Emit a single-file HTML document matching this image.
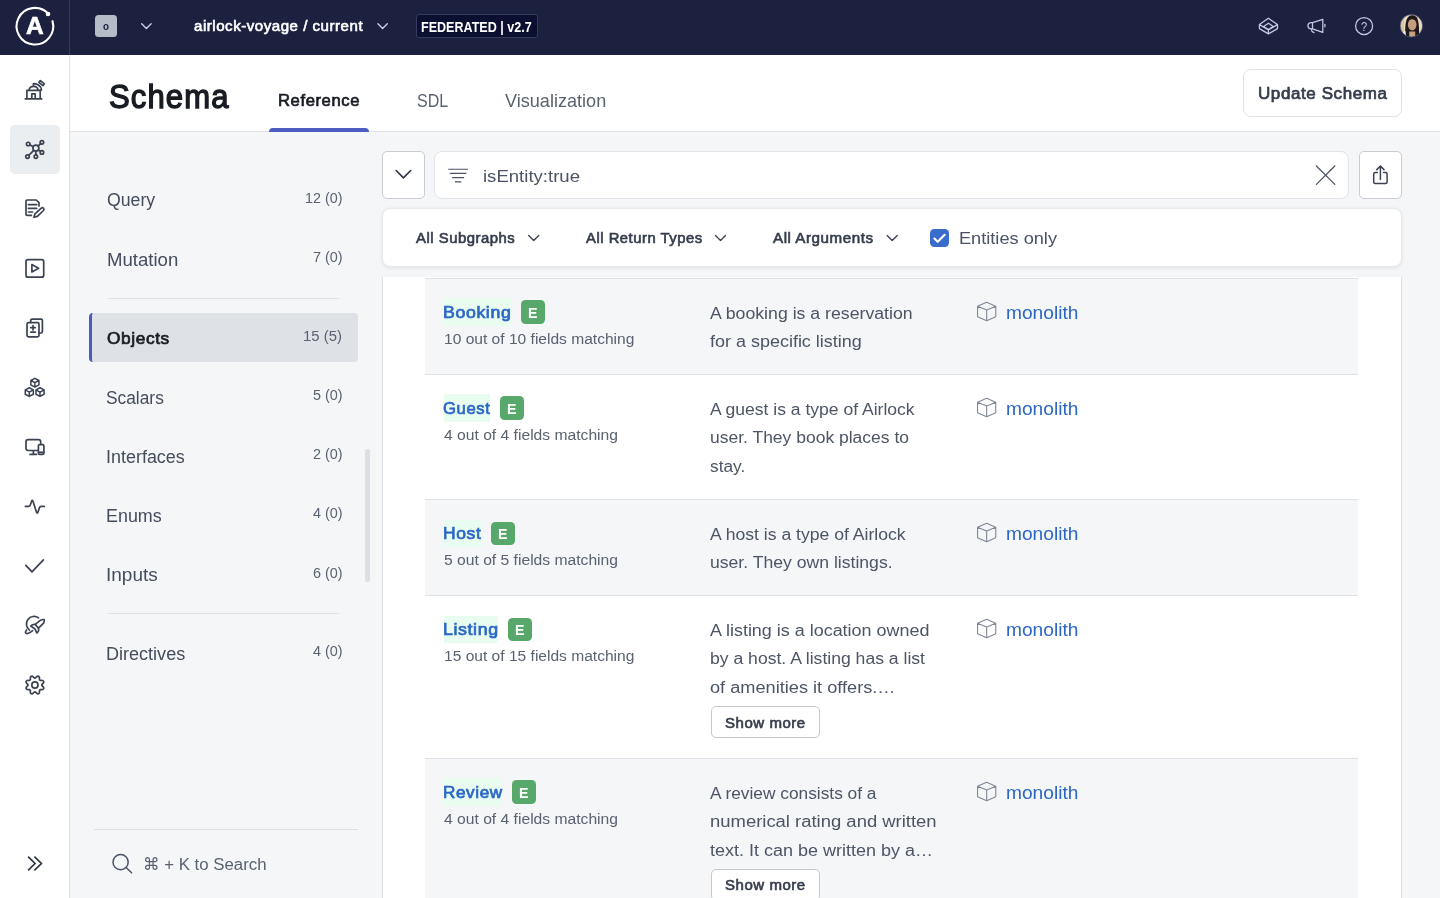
<!DOCTYPE html>
<html lang="en">
<head>
<meta charset="utf-8">
<title>Schema Reference - airlock-voyage / current - Apollo Studio</title>
<style>
*{box-sizing:border-box;margin:0;padding:0}
html,body{width:1440px;height:898px;overflow:hidden;background:#f4f6f8}
body{font-family:"Liberation Sans",sans-serif;color:#424855;-webkit-font-smoothing:antialiased}
#app{position:relative;width:1440px;height:898px;overflow:hidden;background:#f4f6f8}
.abs{position:absolute}
#txt{position:absolute;left:0;top:0;width:1440px;height:898px;will-change:transform}
.t{position:absolute;white-space:nowrap;transform-origin:0 50%;display:block;text-decoration:none}
svg{position:absolute;overflow:visible}
.ic{fill:none;stroke:#3b4252;stroke-width:1.7;stroke-linecap:round;stroke-linejoin:round}
.tic{fill:none;stroke:#c5cae0;stroke-width:1.25;stroke-linecap:round;stroke-linejoin:round}
/* layout boxes */
#topbar{left:0;top:0;width:1440px;height:55px;background:#1c2140}
#logocell{left:0;top:0;width:70px;height:55px;border-right:1px solid #353b5c}
#rail{left:0;top:55px;width:70px;height:843px;background:#fff;border-right:1px solid #dee2e7}
#railactive{left:10px;top:124.5px;width:49.5px;height:49.5px;border-radius:5px;background:#ebeef0}
#header{left:70px;top:55px;width:1370px;height:77px;background:#fff;border-bottom:1px solid #dee2e7}
#tabline{left:269px;top:127.5px;width:100px;height:4px;background:#4c5cc0;border-radius:4px 4px 0 0}
#updbtn{left:1242.5px;top:69.2px;width:159.4px;height:47.5px;border:1px solid #dee2e7;border-radius:7.5px;background:#fff}
#orgbox{left:95px;top:15px;width:22px;height:22px;border-radius:3.5px;background:#b6bbc8}
#fedbadge{left:416px;top:14px;width:122px;height:23.5px;border:1px solid #353b5c;border-radius:3px;background:#0b1031}
.navdiv{height:1px;background:#dee2e7}
#navsel{left:89px;top:313px;width:269px;height:49px;border-radius:4px;background:#dee2e7;border-left:3.75px solid #4a5bbd}
#scrollthumb{left:365.3px;top:449px;width:4.3px;height:133px;border-radius:2px;background:#dcdfe5}
#ddbtn{left:382px;top:151px;width:43px;height:48px;border:1px solid #c9ccd3;border-radius:5px;background:#fff}
#search{left:434px;top:151px;width:915px;height:48px;border:1px solid #e1e4e9;border-radius:8px;background:#fff}
#sharebtn{left:1359px;top:151px;width:43px;height:48px;border:1px solid #c9ccd3;border-radius:5px;background:#fff}
#filterbar{left:382px;top:208px;width:1020px;height:59px;border:1px solid #e6e9ed;border-radius:8px;background:#fff;box-shadow:0 0 4px rgba(18,21,26,.05),0 2px 3px rgba(18,21,26,.04)}
#checkbox{left:930px;top:228.5px;width:18.8px;height:18.8px;border-radius:4.2px;background:#3a6ccb}
#panel{left:382px;top:277px;width:1020px;height:640px;background:#fff;border:1px solid #dee2e7;border-top:none}
.row{left:425px;width:933px;border-top:1px solid #dee2e7}
.row.g{background:#f4f6f8}
.hl{background:#e8fcef;height:27.8px}
.eb{width:23.8px;height:23.6px;border-radius:4.5px;background:#58a86b}
.smbtn{left:711px;width:109px;height:32.2px;border:1px solid #c4c8d0;border-radius:5px;background:#fff}
</style>
</head>
<body>
<div id="app">

<!-- top navigation bar -->
<div id="topbar" class="abs"></div>
<div id="logocell" class="abs"></div>
<div id="orgbox" class="abs"></div>
<div id="fedbadge" class="abs"></div>
<!-- left rail -->
<div id="rail" class="abs"></div>
<div id="railactive" class="abs"></div>
<!-- page header -->
<div id="header" class="abs"></div>
<div id="tabline" class="abs"></div>
<div id="updbtn" class="abs"></div>
<!-- type navigation -->
<div class="abs navdiv" style="left:107.5px;top:298px;width:231.5px"></div>
<div id="navsel" class="abs"></div>
<div class="abs navdiv" style="left:107.5px;top:613px;width:231.5px"></div>
<div class="abs navdiv" style="left:94px;top:828.5px;width:264px"></div>
<div id="scrollthumb" class="abs"></div>
<!-- results panel -->
<div id="panel" class="abs"></div>
<div class="abs row g" style="top:277.5px;height:97px"></div>
<div class="abs row" style="top:374.3px;height:125px"></div>
<div class="abs row g" style="top:499px;height:97px"></div>
<div class="abs row" style="top:595px;height:163px"></div>
<div class="abs row g" style="top:758px;height:160px"></div>
<div class="abs hl" style="left:443.8px;top:298.4px;width:67.2px"></div>
<div class="abs hl" style="left:443.8px;top:394.4px;width:46.2px"></div>
<div class="abs hl" style="left:443.8px;top:519.5px;width:37.2px"></div>
<div class="abs hl" style="left:443.8px;top:615.5px;width:54.5px"></div>
<div class="abs hl" style="left:443.8px;top:778.4px;width:58.6px"></div>
<div class="abs eb" style="left:520.9px;top:300.4px"></div>
<div class="abs eb" style="left:499.9px;top:396.4px"></div>
<div class="abs eb" style="left:490.9px;top:521.5px"></div>
<div class="abs eb" style="left:508.2px;top:617.5px"></div>
<div class="abs eb" style="left:512.3px;top:780.4px"></div>
<div class="abs smbtn" style="top:706px"></div>
<div class="abs smbtn" style="top:868.6px"></div>
<!-- search / filter controls -->
<div id="ddbtn" class="abs"></div>
<div id="search" class="abs"></div>
<div id="sharebtn" class="abs"></div>
<div id="filterbar" class="abs"></div>
<div id="checkbox" class="abs"></div>

<!-- text layer -->
<div id="txt">
<span class="t" style="left:26.2px;top:14.000px;font-size:24.4px;line-height:24.4px;font-weight:700;-webkit-text-stroke:0.73px currentColor;color:#ffffff;transform:scaleX(0.9986);">A</span>
<span class="t" style="left:1361.0px;top:21.000px;font-size:12.0px;line-height:12.0px;font-weight:400;color:#c5cae0;transform:scaleX(0.9271);">?</span>
<span class="t" style="left:103.0px;top:21.000px;font-size:10.5px;line-height:10.5px;font-weight:700;color:#1c2140;transform:scaleX(0.9343);">o</span>
<span class="t" style="left:194.2px;top:19.000px;font-size:14.44px;line-height:14.44px;font-weight:400;-webkit-text-stroke:0.61px currentColor;letter-spacing:0.51px;color:#ffffff;transform:scaleX(1.0420);">airlock-voyage / current</span>
<span class="t" style="left:421.4px;top:21.000px;font-size:13.9px;line-height:13.9px;font-weight:700;color:#ffffff;transform:scaleX(0.9029);">FEDERATED | v2.7</span>
<h1 class="t" style="left:109.4px;top:81.000px;font-size:32.49px;line-height:32.49px;font-weight:400;-webkit-text-stroke:1.36px currentColor;letter-spacing:1.14px;color:#191c23;transform:scaleX(0.9565);">Schema</h1>
<a class="t" style="left:278.2px;top:92.000px;font-size:17.0px;line-height:17.0px;font-weight:400;-webkit-text-stroke:0.71px currentColor;letter-spacing:0.60px;color:#191c23;transform:scaleX(0.9780);">Reference</a>
<a class="t" style="left:416.6px;top:93.000px;font-size:17.9px;line-height:17.9px;font-weight:400;color:#5a6270;transform:scaleX(0.8962);">SDL</a>
<a class="t" style="left:504.6px;top:93.000px;font-size:17.9px;line-height:17.9px;font-weight:400;color:#5a6270;transform:scaleX(1.0107);">Visualization</a>
<span class="t" style="left:1257.5px;top:86.000px;font-size:16.62px;line-height:16.62px;font-weight:400;-webkit-text-stroke:0.70px currentColor;letter-spacing:0.58px;color:#353c4b;transform:scaleX(1.0231);">Update Schema</span>
<a class="t" style="left:106.6px;top:192.000px;font-size:17.5px;line-height:17.5px;font-weight:400;color:#454c5b;transform:scaleX(1.0114);">Query</a>
<span class="t" style="left:304.8px;top:190.000px;font-size:15.0px;line-height:15.0px;font-weight:400;color:#5a6270;transform:scaleX(0.9544);">12 (0)</span>
<a class="t" style="left:106.5px;top:252.000px;font-size:17.5px;line-height:17.5px;font-weight:400;color:#454c5b;transform:scaleX(1.0622);">Mutation</a>
<span class="t" style="left:312.6px;top:249.000px;font-size:15.0px;line-height:15.0px;font-weight:400;color:#5a6270;transform:scaleX(0.9597);">7 (0)</span>
<a class="t" style="left:107.0px;top:331.000px;font-size:16.62px;line-height:16.62px;font-weight:400;-webkit-text-stroke:0.70px currentColor;letter-spacing:0.58px;color:#191c23;transform:scaleX(1.0399);">Objects</a>
<span class="t" style="left:303.3px;top:328.000px;font-size:15.0px;line-height:15.0px;font-weight:400;color:#5a6270;transform:scaleX(0.9927);">15 (5)</span>
<a class="t" style="left:106.3px;top:390.000px;font-size:17.5px;line-height:17.5px;font-weight:400;color:#454c5b;transform:scaleX(0.9904);">Scalars</a>
<span class="t" style="left:312.6px;top:387.000px;font-size:15.0px;line-height:15.0px;font-weight:400;color:#5a6270;transform:scaleX(0.9597);">5 (0)</span>
<a class="t" style="left:105.7px;top:449.000px;font-size:17.5px;line-height:17.5px;font-weight:400;color:#454c5b;transform:scaleX(1.0252);">Interfaces</a>
<span class="t" style="left:312.6px;top:446.000px;font-size:15.0px;line-height:15.0px;font-weight:400;color:#5a6270;transform:scaleX(0.9597);">2 (0)</span>
<a class="t" style="left:105.7px;top:508.000px;font-size:17.5px;line-height:17.5px;font-weight:400;color:#454c5b;transform:scaleX(1.0226);">Enums</a>
<span class="t" style="left:312.6px;top:505.000px;font-size:15.0px;line-height:15.0px;font-weight:400;color:#5a6270;transform:scaleX(0.9597);">4 (0)</span>
<a class="t" style="left:105.7px;top:567.000px;font-size:17.5px;line-height:17.5px;font-weight:400;color:#454c5b;transform:scaleX(1.0862);">Inputs</a>
<span class="t" style="left:312.6px;top:565.000px;font-size:15.0px;line-height:15.0px;font-weight:400;color:#5a6270;transform:scaleX(0.9597);">6 (0)</span>
<a class="t" style="left:105.8px;top:646.000px;font-size:17.5px;line-height:17.5px;font-weight:400;color:#454c5b;transform:scaleX(1.0309);">Directives</a>
<span class="t" style="left:312.6px;top:643.000px;font-size:15.0px;line-height:15.0px;font-weight:400;color:#5a6270;transform:scaleX(0.9597);">4 (0)</span>
<span class="t" style="left:143.0px;top:856.000px;font-size:17.3px;line-height:17.3px;font-weight:400;color:#5a6270;transform:scaleX(0.9724);">&#8984; + K to Search</span>
<span class="t" style="left:482.7px;top:168.000px;font-size:16.4px;line-height:16.4px;font-weight:400;color:#4a5264;transform:scaleX(1.1326);">isEntity:true</span>
<span class="t" style="left:416.0px;top:231.000px;font-size:14.44px;line-height:14.44px;font-weight:400;-webkit-text-stroke:0.61px currentColor;letter-spacing:0.51px;color:#353c4b;transform:scaleX(1.0287);">All Subgraphs</span>
<span class="t" style="left:585.6px;top:231.000px;font-size:14.44px;line-height:14.44px;font-weight:400;-webkit-text-stroke:0.61px currentColor;letter-spacing:0.51px;color:#353c4b;transform:scaleX(1.0253);">All Return Types</span>
<span class="t" style="left:772.7px;top:231.000px;font-size:14.44px;line-height:14.44px;font-weight:400;-webkit-text-stroke:0.61px currentColor;letter-spacing:0.51px;color:#353c4b;transform:scaleX(1.0502);">All Arguments</span>
<label class="t" style="left:958.6px;top:230.000px;font-size:17.3px;line-height:17.3px;font-weight:400;color:#4a5264;transform:scaleX(1.0516);">Entities only</label>
<a class="t" style="left:443.4px;top:304.000px;font-size:16.34px;line-height:16.34px;font-weight:400;-webkit-text-stroke:0.69px currentColor;letter-spacing:0.57px;color:#2b67c6;transform:scaleX(1.0853);">Booking</a>
<span class="t" style="left:527.9px;top:305.000px;font-size:15.0px;line-height:15.0px;font-weight:700;color:#ffffff;transform:scaleX(0.9485);">E</span>
<span class="t" style="left:443.7px;top:331.000px;font-size:15.1px;line-height:15.1px;font-weight:400;color:#5a6270;transform:scaleX(1.0314);">10 out of 10 fields matching</span>
<span class="t" style="left:710.4px;top:305.000px;font-size:17.3px;line-height:17.3px;font-weight:400;color:#4d5565;transform:scaleX(1.0238);">A booking is a reservation</span>
<span class="t" style="left:710.4px;top:333.000px;font-size:17.3px;line-height:17.3px;font-weight:400;color:#4d5565;transform:scaleX(1.0397);">for a specific listing</span>
<a class="t" style="left:1006.0px;top:305.000px;font-size:17.9px;line-height:17.9px;font-weight:400;color:#2b67c6;transform:scaleX(1.0706);">monolith</a>
<a class="t" style="left:443.4px;top:400.000px;font-size:16.34px;line-height:16.34px;font-weight:400;-webkit-text-stroke:0.69px currentColor;letter-spacing:0.57px;color:#2b67c6;transform:scaleX(1.0205);">Guest</a>
<span class="t" style="left:506.9px;top:401.000px;font-size:15.0px;line-height:15.0px;font-weight:700;color:#ffffff;transform:scaleX(0.9485);">E</span>
<span class="t" style="left:443.7px;top:427.000px;font-size:15.1px;line-height:15.1px;font-weight:400;color:#5a6270;transform:scaleX(1.0369);">4 out of 4 fields matching</span>
<span class="t" style="left:710.4px;top:401.000px;font-size:17.3px;line-height:17.3px;font-weight:400;color:#4d5565;transform:scaleX(1.0142);">A guest is a type of Airlock</span>
<span class="t" style="left:710.4px;top:429.000px;font-size:17.3px;line-height:17.3px;font-weight:400;color:#4d5565;transform:scaleX(1.0121);">user. They book places to</span>
<span class="t" style="left:710.4px;top:458.000px;font-size:17.3px;line-height:17.3px;font-weight:400;color:#4d5565;transform:scaleX(0.9995);">stay.</span>
<a class="t" style="left:1006.0px;top:401.000px;font-size:17.9px;line-height:17.9px;font-weight:400;color:#2b67c6;transform:scaleX(1.0706);">monolith</a>
<a class="t" style="left:443.4px;top:525.000px;font-size:16.34px;line-height:16.34px;font-weight:400;-webkit-text-stroke:0.69px currentColor;letter-spacing:0.57px;color:#2b67c6;transform:scaleX(1.0701);">Host</a>
<span class="t" style="left:497.9px;top:526.000px;font-size:15.0px;line-height:15.0px;font-weight:700;color:#ffffff;transform:scaleX(0.9485);">E</span>
<span class="t" style="left:443.7px;top:552.000px;font-size:15.1px;line-height:15.1px;font-weight:400;color:#5a6270;transform:scaleX(1.0369);">5 out of 5 fields matching</span>
<span class="t" style="left:710.4px;top:526.000px;font-size:17.3px;line-height:17.3px;font-weight:400;color:#4d5565;transform:scaleX(1.0181);">A host is a type of Airlock</span>
<span class="t" style="left:710.4px;top:554.000px;font-size:17.3px;line-height:17.3px;font-weight:400;color:#4d5565;transform:scaleX(1.0183);">user. They own listings.</span>
<a class="t" style="left:1006.0px;top:526.000px;font-size:17.9px;line-height:17.9px;font-weight:400;color:#2b67c6;transform:scaleX(1.0706);">monolith</a>
<a class="t" style="left:443.4px;top:621.000px;font-size:16.34px;line-height:16.34px;font-weight:400;-webkit-text-stroke:0.69px currentColor;letter-spacing:0.57px;color:#2b67c6;transform:scaleX(1.0873);">Listing</a>
<span class="t" style="left:515.2px;top:622.000px;font-size:15.0px;line-height:15.0px;font-weight:700;color:#ffffff;transform:scaleX(0.9485);">E</span>
<span class="t" style="left:443.7px;top:648.000px;font-size:15.1px;line-height:15.1px;font-weight:400;color:#5a6270;transform:scaleX(1.0314);">15 out of 15 fields matching</span>
<span class="t" style="left:710.4px;top:622.000px;font-size:17.3px;line-height:17.3px;font-weight:400;color:#4d5565;transform:scaleX(1.0381);">A listing is a location owned</span>
<span class="t" style="left:710.4px;top:650.000px;font-size:17.3px;line-height:17.3px;font-weight:400;color:#4d5565;transform:scaleX(1.0173);">by a host. A listing has a list</span>
<span class="t" style="left:710.4px;top:679.000px;font-size:17.3px;line-height:17.3px;font-weight:400;color:#4d5565;transform:scaleX(1.0515);">of amenities it offers.&hellip;</span>
<a class="t" style="left:1006.0px;top:622.000px;font-size:17.9px;line-height:17.9px;font-weight:400;color:#2b67c6;transform:scaleX(1.0706);">monolith</a>
<span class="t" style="left:725.0px;top:716.000px;font-size:14.44px;line-height:14.44px;font-weight:400;-webkit-text-stroke:0.61px currentColor;letter-spacing:0.51px;color:#353c4b;transform:scaleX(1.0399);">Show more</span>
<a class="t" style="left:443.4px;top:784.000px;font-size:16.34px;line-height:16.34px;font-weight:400;-webkit-text-stroke:0.69px currentColor;letter-spacing:0.57px;color:#2b67c6;transform:scaleX(1.0492);">Review</a>
<span class="t" style="left:519.3px;top:785.000px;font-size:15.0px;line-height:15.0px;font-weight:700;color:#ffffff;transform:scaleX(0.9485);">E</span>
<span class="t" style="left:443.7px;top:811.000px;font-size:15.1px;line-height:15.1px;font-weight:400;color:#5a6270;transform:scaleX(1.0369);">4 out of 4 fields matching</span>
<span class="t" style="left:710.4px;top:785.000px;font-size:17.3px;line-height:17.3px;font-weight:400;color:#4d5565;transform:scaleX(1.0020);">A review consists of a</span>
<span class="t" style="left:710.4px;top:813.000px;font-size:17.3px;line-height:17.3px;font-weight:400;color:#4d5565;transform:scaleX(1.0675);">numerical rating and written</span>
<span class="t" style="left:710.4px;top:842.000px;font-size:17.3px;line-height:17.3px;font-weight:400;color:#4d5565;transform:scaleX(1.0411);">text. It can be written by a&hellip;</span>
<a class="t" style="left:1006.0px;top:785.000px;font-size:17.9px;line-height:17.9px;font-weight:400;color:#2b67c6;transform:scaleX(1.0706);">monolith</a>
<span class="t" style="left:725.0px;top:878.000px;font-size:14.44px;line-height:14.44px;font-weight:400;-webkit-text-stroke:0.61px currentColor;letter-spacing:0.51px;color:#353c4b;transform:scaleX(1.0399);">Show more</span>
</div>
<!-- icons -->
<svg width="1440" height="898" viewBox="0 0 1440 898" style="left:0;top:0;pointer-events:none" aria-hidden="true">
<path d="M48.28 13.72A18.3 18.3 0 1 0 52.49 21.16" fill="none" stroke="#fff" stroke-width="2.1" stroke-linecap="round"/>
<circle cx="48.0" cy="14.0" r="2.3" fill="#fff"/>
<path class="tic" style="stroke-width:1.4;stroke:#c9cee3" d="M141.7 23.7L146.4 28.5L151.1 23.7"/>
<path class="tic" style="stroke-width:1.4;stroke:#c9cee3" d="M377.9 23.7L382.6 28.5L387.3 23.7"/>
<path class="tic" d="M1268.4 18.3L1277.5 24.6V28.6L1268.4 33.9L1259.4 28.6V24.6ZM1259.4 24.6L1268.4 29.9L1277.5 24.6M1268.4 29.9V33.9M1268.4 23.2L1273.2 26.4L1268.4 29.6L1263.6 26.4Z"/>
<path class="tic" d="M1322.8 19.3V32.4L1312.5 28.9H1310.6A3.2 3.2 0 0 1 1310.6 22.6H1312.5ZM1312.5 22.7V28.9M1311.2 29C1311.4 30.8 1312.4 32.2 1314 32.7M1324.9 24.3V26.8"/>
<circle class="tic" cx="1364.1" cy="26" r="8.5"/>
<defs><clipPath id="avc"><circle cx="1411.4" cy="25.8" r="11.2"/></clipPath></defs>
<g clip-path="url(#avc)"><rect x="1400" y="14" width="23" height="24" fill="#e9d9bf"/><path d="M1400 14H1404V38H1400Z" fill="#dcc4a0"/><path d="M1405.6 38C1404.8 30 1405 20.5 1408.2 17C1410.8 14.6 1414.6 14.8 1416.8 17.6C1419 21 1419.4 30 1418.8 38Z" fill="#1d1819"/><ellipse cx="1412.2" cy="24.6" rx="4.3" ry="5.8" fill="#c59d7e"/><path d="M1409.2 31.5H1415.2V38H1409.2Z" fill="#c8a182"/><path d="M1400 33L1405.4 31L1406.4 38H1400Z" fill="#ece9ee"/><path d="M1407.9 22.5C1408.4 19.6 1411.6 17.6 1416.5 21C1416 18 1413.8 16.2 1411.8 16.4C1409.4 16.8 1407.8 19.5 1407.9 22.5Z" fill="#1d1819"/></g>
<circle cx="1411.4" cy="25.8" r="11.3" fill="none" stroke="#3a4063" stroke-width="0.8"/>
<path class="ic" d="M25.3 98.9H41.7M26.9 98.9V90.4H40.2V98.9M31.8 98.9V93.8H35.2V98.9M28.9 90.4A4.7 4.7 0 0 1 38.2 90.4M33.4 85.6V83.6Q37.8 83.4 40.3 86.8Q41.6 88.4 41.4 90.2M38.9 82.4L40.4 80.6L44.4 83.8L42.9 85.6Z"/>
<path class="ic" d="M33.24 146.76L29.73 144.84M38.02 146.11L40.64 143.57M38.33 149.91L40.46 151.40M35.87 151.20L35.87 154.80M33.75 150.32L28.74 155.31"/>
<circle class="ic" cx="35.87" cy="148.2" r="3.0"/>
<circle class="ic" cx="28.2" cy="144.0" r="1.75"/>
<circle class="ic" cx="41.9" cy="142.35" r="1.75"/>
<circle class="ic" cx="41.9" cy="152.4" r="1.75"/>
<circle class="ic" cx="35.87" cy="156.55" r="1.75"/>
<circle class="ic" cx="27.5" cy="156.55" r="1.75"/>
<path class="ic" d="M31.4 215.4H27.2Q26 215.4 26 214.2V201.2Q26 200 27.2 200H36.2L39 202.6V206M28.4 204.7H36.7M28.4 208.4H36.7M28.4 212H32.5M41.3 208.2Q42.4 207.2 43.5 208.3Q44.5 209.4 43.5 210.5L37.4 216.4L33.9 217.3L34.9 213.9Z"/>
<rect class="ic" x="26" y="259.7" width="17.7" height="17.5" rx="2"/>
<path class="ic" d="M31.9 264.6V271.9L38.6 268.2Z"/>
<rect class="ic" x="27" y="322.7" width="12" height="14.2" rx="1.6"/>
<path class="ic" d="M30.7 322.5V320.6Q30.7 319.2 32.1 319.2H41Q42.4 319.2 42.4 320.6V331.6Q42.4 333 41 333H39.2M33 325.5V329.9M30.8 327.7H35.2M30.9 332.2H35.2"/>
<path class="ic" style="stroke-width:1.5" d="M34.90 378.35L38.95 380.52L38.95 384.88L34.90 387.05L30.85 384.88L30.85 380.52ZM30.85 380.52L34.90 382.70L38.95 380.52M34.90 382.70L34.90 387.05"/>
<path class="ic" style="stroke-width:1.5" d="M29.30 387.75L33.35 389.93L33.35 394.28L29.30 396.45L25.25 394.28L25.25 389.93ZM25.25 389.93L29.30 392.10L33.35 389.93M29.30 392.10L29.30 396.45"/>
<path class="ic" style="stroke-width:1.5" d="M40.00 387.75L44.05 389.93L44.05 394.28L40.00 396.45L35.95 394.28L35.95 389.93ZM35.95 389.93L40.00 392.10L44.05 389.93M40.00 392.10L40.00 396.45"/>
<path class="ic" d="M37.6 450.5H28.2Q26 450.5 26 448.3V441.9Q26 439.7 28.2 439.7H38.5Q40.7 439.7 40.7 441.9V443.6M33.4 450.6V454.4M30 454.4H36.5"/>
<rect class="ic" x="38.4" y="444.7" width="5.5" height="9.7" rx="1.4"/>
<path class="ic" d="M38.6 452.3H43.7"/>
<path class="ic" d="M25.4 506.4H28.6Q29.8 506.4 30.2 505.2L31.6 501.2Q32.4 499.4 33 501.3L36.5 512.3Q37.2 514 37.9 512.2L39.6 507.4Q40 506.4 41 506.4H44.2"/>
<path class="ic" d="M25.9 565.4L32 571.9L43.4 559.9"/>
<path class="ic" d="M38.5 617.9A7.4 7.4 0 0 0 29.5 630.1M26.5 630Q24 633.6 27.2 633.6Q29.6 633.4 32.6 630.7M35.2 624.4L40.6 620.2Q42.6 619.2 44.2 619.6Q44.7 621.2 43.6 623.2L38.5 628.2ZM35.2 624.4Q32.4 624.2 30.7 626L34.7 628.7M38.5 628.2Q39.3 630.8 37 633L34.7 628.7"/>
<path class="ic" d="M41.85 685.00L41.95 685.46L42.27 685.97L42.94 686.60L43.56 687.32L43.74 688.00L43.63 688.62L43.27 689.13L42.67 689.48L41.72 689.56L40.80 689.52L40.22 689.66L39.81 689.91L39.56 690.32L39.42 690.90L39.46 691.82L39.38 692.77L39.03 693.37L38.52 693.73L37.90 693.84L37.22 693.66L36.50 693.04L35.87 692.37L35.36 692.05L34.90 691.95L34.44 692.05L33.93 692.37L33.30 693.04L32.58 693.66L31.90 693.84L31.28 693.73L30.77 693.37L30.42 692.77L30.34 691.82L30.38 690.90L30.24 690.32L29.99 689.91L29.58 689.66L29.00 689.52L28.08 689.56L27.13 689.48L26.53 689.13L26.17 688.62L26.06 688.00L26.24 687.32L26.86 686.60L27.53 685.97L27.85 685.46L27.95 685.00L27.85 684.54L27.53 684.03L26.86 683.40L26.24 682.68L26.06 682.00L26.17 681.38L26.53 680.87L27.13 680.52L28.08 680.44L29.00 680.48L29.58 680.34L29.99 680.09L30.24 679.68L30.38 679.10L30.34 678.18L30.42 677.23L30.77 676.63L31.28 676.27L31.90 676.16L32.58 676.34L33.30 676.96L33.93 677.63L34.44 677.95L34.90 678.05L35.36 677.95L35.87 677.63L36.50 676.96L37.22 676.34L37.90 676.16L38.52 676.27L39.03 676.63L39.38 677.23L39.46 678.18L39.42 679.10L39.56 679.68L39.81 680.09L40.22 680.34L40.80 680.48L41.72 680.44L42.67 680.52L43.27 680.87L43.63 681.38L43.74 682.00L43.56 682.68L42.94 683.40L42.27 684.03L41.95 684.54Z"/>
<circle class="ic" cx="34.9" cy="685" r="3.1"/>
<path class="ic" style="stroke:#2f3542;stroke-linecap:butt;stroke-linejoin:miter" d="M28.1 856.7L35 863.5L28.1 870.3M34.4 856.7L41.4 863.5L34.4 870.3"/>
<circle cx="120.6" cy="862.2" r="7.6" fill="none" stroke="#4a5264" stroke-width="1.5"/>
<path d="M126.1 867.5L131.6 872.8" fill="none" stroke="#4a5264" stroke-width="1.5" stroke-linecap="round"/>
<path d="M396.2 170.5L403.4 177.9L410.7 170.5" fill="none" stroke="#2f3542" stroke-width="1.6" stroke-linecap="round" stroke-linejoin="round"/>
<path d="M448.7 169.2H467.5M450.4 173.4H465.9M452.5 177.6H463.7M455.2 181.8H460.9" fill="none" stroke="#4a5264" stroke-width="1.15" stroke-linecap="round"/>
<path d="M1316.4 166L1334.8 184.4M1334.8 166L1316.4 184.4" fill="none" stroke="#4a5264" stroke-width="1.25" stroke-linecap="round"/>
<path d="M1380.4 166V179.4M1376.8 169.6L1380.4 166L1384 169.6M1377.4 172.5H1375.2Q1373.7 172.5 1373.7 174V182.1Q1373.7 183.6 1375.2 183.6H1385.6Q1387.1 183.6 1387.1 182.1V174Q1387.1 172.5 1385.6 172.5H1383.5" fill="none" stroke="#3b4252" stroke-width="1.5" stroke-linecap="round" stroke-linejoin="round"/>
<path d="M528.7 235.6L533.7 240.5L538.7 235.6" fill="none" stroke="#3b4252" stroke-width="1.4" stroke-linecap="round" stroke-linejoin="round"/>
<path d="M715.5 235.6L720.5 240.5L725.5 235.6" fill="none" stroke="#3b4252" stroke-width="1.4" stroke-linecap="round" stroke-linejoin="round"/>
<path d="M887.2 235.6L892.2 240.5L897.2 235.6" fill="none" stroke="#3b4252" stroke-width="1.4" stroke-linecap="round" stroke-linejoin="round"/>
<path d="M934.4 238.5L937.7 241.8L944.7 234.8" fill="none" stroke="#fff" stroke-width="2.1" stroke-linecap="round" stroke-linejoin="round"/>
<path d="M986.65 302.30L995.75 306.25L995.75 316.85L986.65 320.80L977.55 316.85L977.55 306.25ZM977.55 306.25L986.65 310.05L995.75 306.25M986.65 310.05L986.65 320.80" fill="none" stroke="#808896" stroke-width="1.1" stroke-linejoin="round"/>
<path d="M986.65 398.30L995.75 402.25L995.75 412.85L986.65 416.80L977.55 412.85L977.55 402.25ZM977.55 402.25L986.65 406.05L995.75 402.25M986.65 406.05L986.65 416.80" fill="none" stroke="#808896" stroke-width="1.1" stroke-linejoin="round"/>
<path d="M986.65 523.30L995.75 527.25L995.75 537.85L986.65 541.80L977.55 537.85L977.55 527.25ZM977.55 527.25L986.65 531.05L995.75 527.25M986.65 531.05L986.65 541.80" fill="none" stroke="#808896" stroke-width="1.1" stroke-linejoin="round"/>
<path d="M986.65 619.30L995.75 623.25L995.75 633.85L986.65 637.80L977.55 633.85L977.55 623.25ZM977.55 623.25L986.65 627.05L995.75 623.25M986.65 627.05L986.65 637.80" fill="none" stroke="#808896" stroke-width="1.1" stroke-linejoin="round"/>
<path d="M986.65 782.20L995.75 786.15L995.75 796.75L986.65 800.70L977.55 796.75L977.55 786.15ZM977.55 786.15L986.65 789.95L995.75 786.15M986.65 789.95L986.65 800.70" fill="none" stroke="#808896" stroke-width="1.1" stroke-linejoin="round"/>
</svg>

</div>
</body>
</html>
